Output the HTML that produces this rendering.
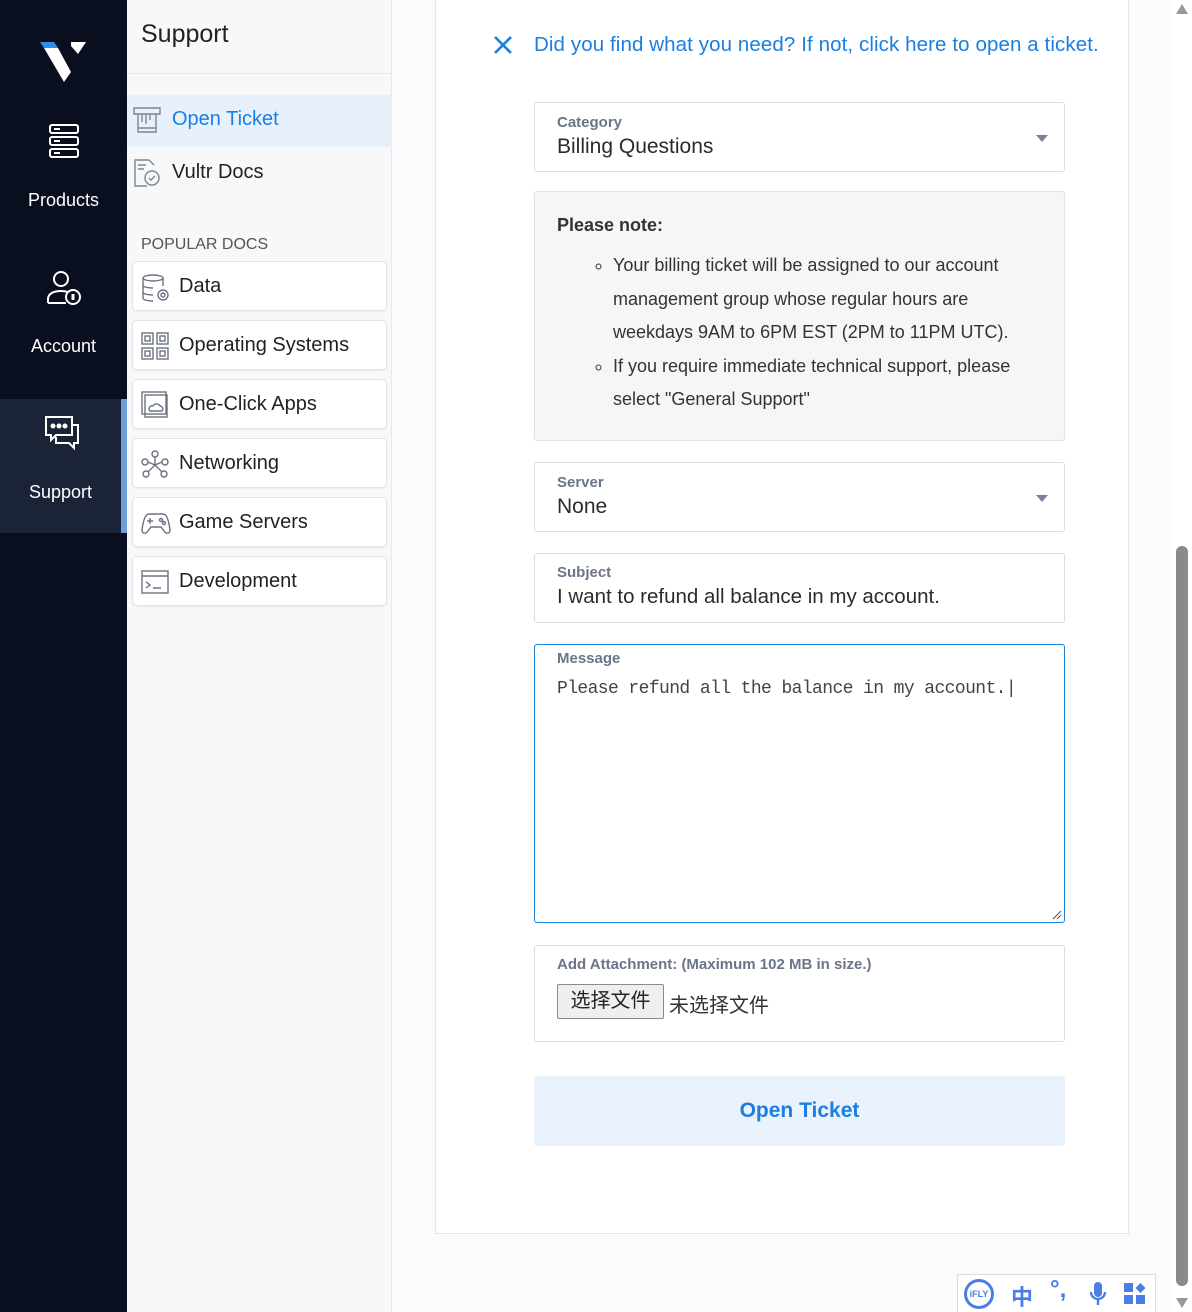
<!DOCTYPE html>
<html><head><meta charset="utf-8"><style>
*{box-sizing:border-box;margin:0;padding:0}
body{width:1192px;height:1312px;overflow:hidden;font-family:"Liberation Sans","Noto Sans CJK SC",sans-serif;background:#fbfbfc;position:relative;color:#212529}
.nav{position:absolute;left:0;top:0;width:127px;height:1312px;background:#0a0f1f}
.nav .it{position:absolute;left:0;width:127px;text-align:center;color:#fff;font-size:18px}
.sub{position:absolute;left:127px;top:0;width:265px;height:1312px;background:#f7f8fa;border-right:1px solid #e8e9ec}
.card{position:absolute;left:435px;top:-2px;width:694px;height:1236px;background:#fff;border:1px solid #e4e5e8}
.f{position:absolute;left:534px;width:531px;background:#fff;border:1px solid #dcdde0;border-radius:3px}
.lab{position:absolute;left:22px;font-size:15px;color:#6b7489;font-weight:bold}
.val{position:absolute;left:22px;font-size:21px;color:#2b2b2b}
.tri{position:absolute;right:16px;top:32px;width:0;height:0;border-left:6px solid transparent;border-right:6px solid transparent;border-top:7px solid #7a8396}
.doc{position:absolute;left:132px;width:255px;height:50px;background:#fff;border:1px solid #e3e4e7;border-radius:5px;box-shadow:0 1px 2px rgba(0,0,0,.06);font-size:20px;line-height:48px;padding-left:46px;color:#1e2227}
.doc svg{position:absolute;left:8px;top:11px}
</style></head><body>
<div class="nav">
 <svg style="position:absolute;left:40px;top:40px" width="48" height="42" viewBox="0 0 48 42"><path d="M0 2h14l4 6H4z" fill="#2c8ff0"/><path d="M4 8h14l13 24-7 10z" fill="#fff"/><path d="M31 2h15l-8 12-7-8z" fill="#fff"/></svg>
 <svg style="position:absolute;left:49px;top:124px" width="30" height="34" viewBox="0 0 30 34" fill="none" stroke="#fff" stroke-width="2"><rect x="1" y="1" width="28" height="8" rx="2"/><rect x="1" y="13" width="28" height="8" rx="2"/><rect x="1" y="25" width="28" height="8" rx="2"/><path d="M5 5h6M5 17h6M5 29h6"/></svg>
 <div class="it" style="top:190px">Products</div>
 <svg style="position:absolute;left:46px;top:270px" width="36" height="36" viewBox="0 0 36 36" fill="none" stroke="#fff" stroke-width="2"><circle cx="15" cy="9" r="7"/><path d="M2 33v-4c0-5 5-8 13-8 3 0 5 .5 7 1"/><path d="M2 33h18"/><circle cx="27" cy="27" r="7"/><path d="M27 24v6" stroke-width="3"/></svg>
 <div class="it" style="top:336px">Account</div>
 <div style="position:absolute;left:0;top:399px;width:127px;height:134px;background:#1b2436"></div>
 <div style="position:absolute;left:121px;top:399px;width:6px;height:134px;background:#6d9fd6"></div>
 <svg style="position:absolute;left:44px;top:415px" width="36" height="36" viewBox="0 0 36 36" fill="none" stroke="#fff" stroke-width="2"><path d="M2 2h26v18H12l-5 5v-5H2z"/><path d="M28 10h6v18h-4v5l-5-5H12v-6"/><circle cx="9" cy="11" r="1.5" fill="#fff"/><circle cx="15" cy="11" r="1.5" fill="#fff"/><circle cx="21" cy="11" r="1.5" fill="#fff"/></svg>
 <div class="it" style="top:482px;left:-3px">Support</div>
</div>
<div class="sub">
 <div style="position:absolute;left:14px;top:20px;font-size:25px;color:#222">Support</div>
 <div style="position:absolute;left:0;top:73px;width:265px;border-top:1px solid #e6e7ea"></div>
 <div style="position:absolute;left:0;top:95px;width:265px;height:52px;background:#e8f1fb"></div>
 <svg style="position:absolute;left:6px;top:106px" width="28" height="28" viewBox="0 0 28 28" fill="none" stroke="#7f8590" stroke-width="1.4"><path d="M1 2h26v6H1zM5 8v18h18V8M9 8v8M13 8v10M17 8v6M5 22h18"/></svg>
 <div style="position:absolute;left:45px;top:108px;font-size:20px;color:#1a7fe0">Open Ticket</div>
 <svg style="position:absolute;left:6px;top:158px" width="28" height="30" viewBox="0 0 28 30" fill="none" stroke="#7f8590" stroke-width="1.4"><path d="M16 2H2v26h12M16 2l5 5M5 7h8M5 11h6"/><circle cx="19" cy="20" r="7"/><path d="M16 20l2 2 4-4"/></svg>
 <div style="position:absolute;left:45px;top:161px;font-size:20px;color:#222">Vultr Docs</div>
 <div style="position:absolute;left:14px;top:236px;font-size:16px;color:#555">POPULAR DOCS</div>
</div>
<div class="doc" style="top:261px"><svg width="30" height="30" viewBox="0 0 30 30" fill="none" stroke="#6c7280" stroke-width="1.4"><ellipse cx="12" cy="5" rx="10" ry="3"/><path d="M2 5v20c0 2 5 3 10 3M22 5v8M2 12c0 2 5 3 10 3M2 19c0 2 5 3 10 3"/><circle cx="22" cy="22" r="5"/><circle cx="22" cy="22" r="2"/></svg>Data</div>
<div class="doc" style="top:320px"><svg width="28" height="28" viewBox="0 0 28 28" fill="none" stroke="#6c7280" stroke-width="1.4"><rect x="1" y="1" width="11" height="11"/><rect x="16" y="1" width="11" height="11"/><rect x="1" y="16" width="11" height="11"/><rect x="16" y="16" width="11" height="11"/><rect x="4" y="4" width="5" height="5"/><rect x="19" y="4" width="5" height="5"/><rect x="4" y="19" width="5" height="5"/><rect x="19" y="19" width="5" height="5"/></svg>Operating Systems</div>
<div class="doc" style="top:379px"><svg width="28" height="28" viewBox="0 0 28 28" fill="none" stroke="#6c7280" stroke-width="1.4"><rect x="1" y="1" width="24" height="22"/><rect x="4" y="4" width="22" height="22"/><path d="M9 20h12a3 3 0 0 0-2-5 4 4 0 0 0-7 0 3 3 0 0 0-3 5z"/></svg>One-Click Apps</div>
<div class="doc" style="top:438px"><svg width="28" height="28" viewBox="0 0 28 28" fill="none" stroke="#6c7280" stroke-width="1.4"><circle cx="14" cy="4" r="3"/><circle cx="4" cy="12" r="3"/><circle cx="24" cy="12" r="3"/><circle cx="5" cy="24" r="3"/><circle cx="23" cy="24" r="3"/><path d="M14 7v8M7 12l7 3 7-3M7 22l7-7 7 7"/></svg>Networking</div>
<div class="doc" style="top:497px"><svg width="30" height="28" viewBox="0 0 30 28" fill="none" stroke="#6c7280" stroke-width="1.4"><path d="M8 5h14c4 0 6 8 7 16 0 4-4 4-6 1l-3-4h-10l-3 4c-2 3-6 3-6-1C2 13 4 5 8 5z"/><path d="M6 12h6M9 9v6"/><circle cx="20" cy="11" r="1.5"/><circle cx="23" cy="14" r="1.5"/></svg>Game Servers</div>
<div class="doc" style="top:556px"><svg width="28" height="28" viewBox="0 0 28 28" fill="none" stroke="#6c7280" stroke-width="1.4"><rect x="1" y="3" width="26" height="22"/><path d="M1 8h26M5 14l4 3-4 3M12 20h8"/></svg>Development</div>

<div class="card"></div>
<svg style="position:absolute;left:493px;top:35px" width="20" height="20" viewBox="0 0 20 20" stroke="#1a7fe0" stroke-width="2.6"><path d="M2 2l16 16M18 2L2 18"/></svg>
<div style="position:absolute;left:534px;top:33px;font-size:20.5px;color:#1a7fe0;letter-spacing:0.1px;white-space:nowrap">Did you find what you need? If not, click here to open a ticket.</div>

<div class="f" style="top:102px;height:70px"><div class="lab" style="top:11px">Category</div><div class="val" style="top:32px">Billing Questions</div><div class="tri"></div></div>
<div class="f" style="top:191px;height:250px;background:#f6f6f7;border-color:#e2e3e6">
 <div style="position:absolute;left:22px;top:23px;font-size:18px;font-weight:bold;color:#333">Please note:</div>
 <ul style="position:absolute;left:78px;top:57px;width:430px;font-size:18px;line-height:33.6px;color:#333;list-style:circle">
 <li>Your billing ticket will be assigned to our account management group whose regular hours are weekdays 9AM to 6PM EST (2PM to 11PM UTC).</li>
 <li>If you require immediate technical support, please select "General Support"</li></ul>
</div>
<div class="f" style="top:462px;height:70px"><div class="lab" style="top:11px">Server</div><div class="val" style="top:32px">None</div><div class="tri"></div></div>
<div class="f" style="top:553px;height:70px"><div class="lab" style="top:10px">Subject</div><div class="val" style="top:31px;font-size:20.5px">I want to refund all balance in my account.</div></div>
<div class="f" style="top:644px;height:279px;border-color:#1a7fe0"><div class="lab" style="top:5px">Message</div><div style="position:absolute;left:22px;top:34px;font-family:'Liberation Mono',monospace;font-size:18px;color:#444;letter-spacing:-0.6px">Please refund all the balance in my account.|</div>
 <svg style="position:absolute;right:2px;bottom:2px" width="10" height="10"><path d="M9 1L1 9M9 5L5 9" stroke="#555"/></svg></div>
<div class="f" style="top:945px;height:97px"><div class="lab" style="top:10px">Add Attachment: (Maximum 102 MB in size.)</div>
 <div style="position:absolute;left:22px;top:38px;height:35px;width:107px;background:#efefef;border:1px solid #8a8a8a;border-radius:2px;font-size:20px;text-align:center;line-height:33px">选择文件</div>
 <div style="position:absolute;left:134px;top:43px;font-size:20px;color:#333">未选择文件</div></div>
<div style="position:absolute;left:534px;top:1076px;width:531px;height:70px;background:#eaf2fd;border-radius:3px;text-align:center;line-height:70px;font-size:21px;font-weight:bold;color:#1a7fe0">Open Ticket</div>

<div style="position:absolute;left:1172px;top:0;width:20px;height:1312px;background:#fff"></div>
<div style="position:absolute;left:1176px;top:4px;width:0;height:0;border-left:6px solid transparent;border-right:6px solid transparent;border-bottom:10px solid #999"></div>
<div style="position:absolute;left:1176px;top:546px;width:12px;height:740px;background:#8a8a8a;border-radius:6px"></div>
<div style="position:absolute;left:1176px;top:1298px;width:0;height:0;border-left:6px solid transparent;border-right:6px solid transparent;border-top:10px solid #999"></div>
<div style="position:absolute;left:957px;top:1274px;width:199px;height:38px;background:#fff;border:1px solid #ddd;border-bottom:none"></div>
<div style="position:absolute;left:964px;top:1279px;width:30px;height:30px;border:3px solid #4a7ee6;border-radius:50%;font-size:9px;font-weight:bold;color:#4a7ee6;text-align:center;line-height:24px">iFLY</div>
<div style="position:absolute;left:1011px;top:1280px;font-size:22px;font-weight:bold;color:#4a7ee6">中</div>
<div style="position:absolute;left:1050px;top:1276px;font-size:24px;font-weight:bold;color:#4a7ee6">°,</div>
<svg style="position:absolute;left:1089px;top:1281px" width="18" height="26" viewBox="0 0 18 26"><rect x="5" y="1" width="8" height="15" rx="4" fill="#4a7ee6"/><path d="M2 11a7 7 0 0 0 14 0M9 18v6" stroke="#4a7ee6" stroke-width="2.4" fill="none"/></svg>
<svg style="position:absolute;left:1124px;top:1283px" width="22" height="22" viewBox="0 0 22 22" fill="#4a7ee6"><rect x="0" y="0" width="9" height="9"/><rect x="0" y="12" width="9" height="9"/><rect x="12" y="12" width="9" height="9"/><path d="M16.5 0l5 5-5 5-5-5z"/></svg>
</body></html>
